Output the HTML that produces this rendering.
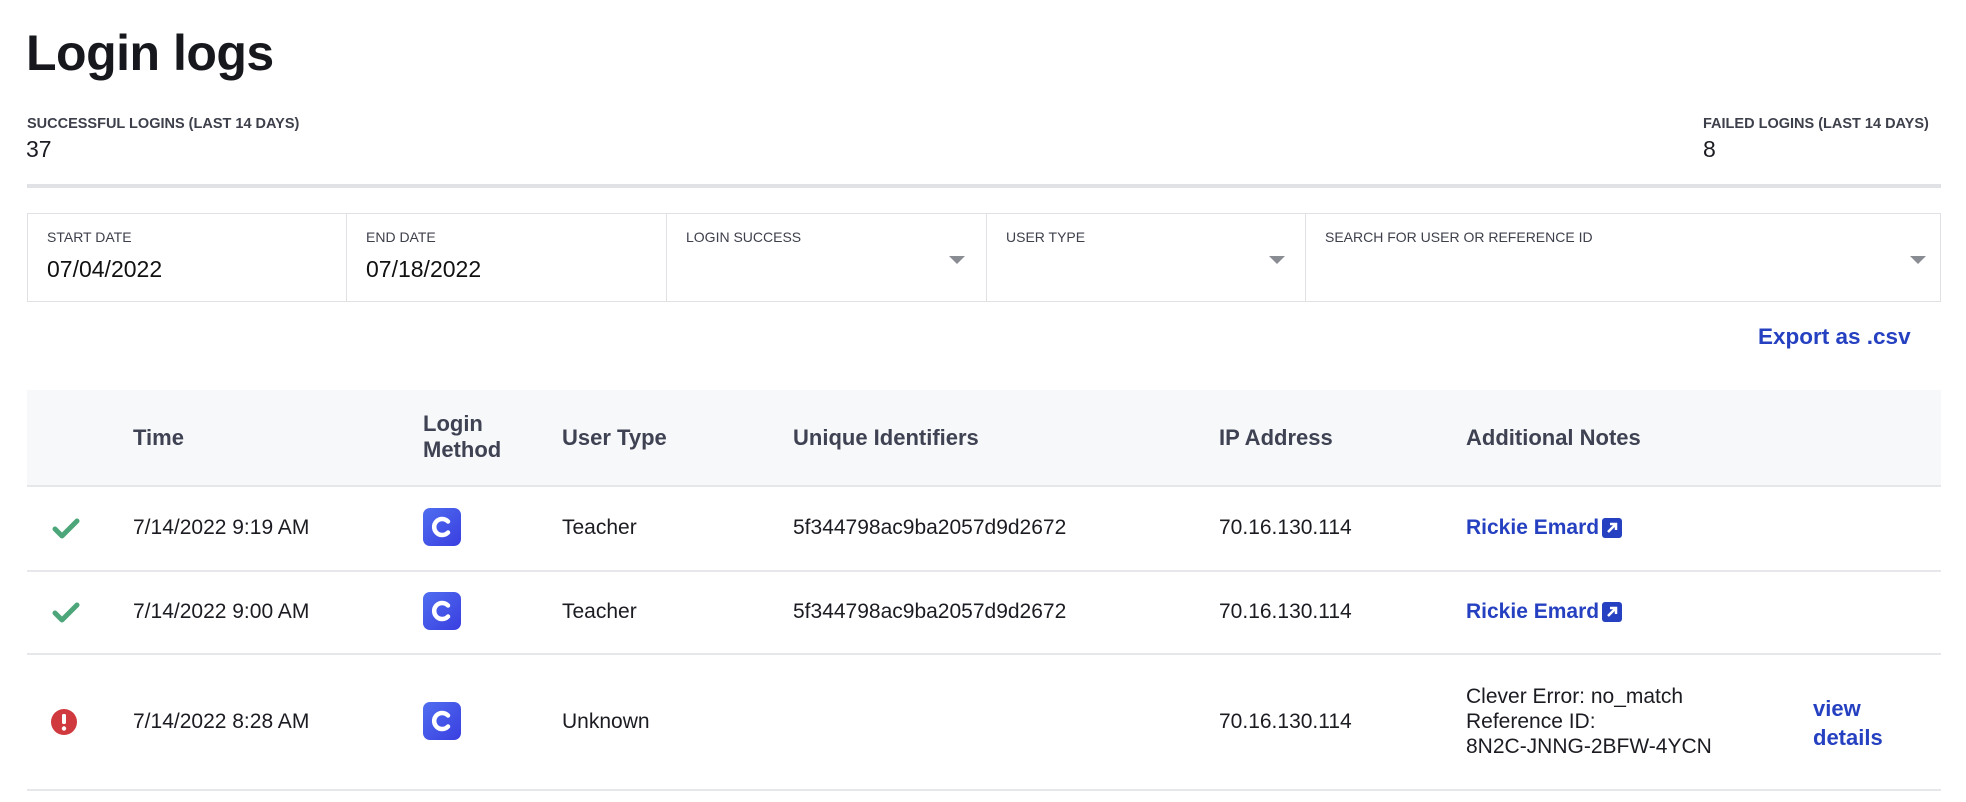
<!DOCTYPE html>
<html><head><meta charset="utf-8"><style>
*{margin:0;padding:0;box-sizing:border-box}
body{width:1966px;height:802px;background:#fff;font-family:"Liberation Sans",sans-serif;color:#1b1c22;position:relative;overflow:hidden}
.a{position:absolute;white-space:nowrap}
h1{position:absolute;left:26px;top:24px;font-size:50px;font-weight:bold;letter-spacing:-0.5px;color:#17181d}
.lbl{font-size:14.5px;font-weight:bold;color:#3d3f4b}
.num{font-size:23px;color:#1b1c22}
.filters{position:absolute;left:27px;top:213px;width:1914px;height:89px;border:1.5px solid #dfe1e5;display:flex}
.f{position:relative;border-right:1.5px solid #dfe1e5;height:100%}
.f:last-child{border-right:none}
.f .l{position:absolute;left:19px;top:15px;font-size:14px;color:#3d3f4b}
.f .v{position:absolute;left:19px;top:42px;font-size:23px;color:#111}
.arr{position:absolute;top:42px;width:0;height:0;border-left:8px solid transparent;border-right:8px solid transparent;border-top:8px solid #8a8c94}
.hdr{position:absolute;left:27px;top:390px;width:1914px;height:97px;background:#f7f8fa;border-bottom:2px solid #e6e7ea}
.h{position:absolute;font-size:22px;font-weight:bold;color:#3f4252;line-height:26px}
.line{position:absolute;left:27px;width:1914px;height:2px;background:#e6e7ea}
.t{position:absolute;font-size:21px;color:#1b1c22;white-space:nowrap}
.t.blue,.blue{color:#2540c0;font-weight:bold}
.c{position:absolute;left:423px;width:38px;height:38px;border-radius:7px;background:linear-gradient(135deg,#4f6ef0,#3a3ee0)}
</style></head><body>
<h1>Login logs</h1>
<div class="a lbl" style="left:27px;top:116px">SUCCESSFUL LOGINS (LAST 14 DAYS)</div>
<div class="a num" style="left:26px;top:136px">37</div>
<div class="a lbl" style="left:1703px;top:116px">FAILED LOGINS (LAST 14 DAYS)</div>
<div class="a num" style="left:1703px;top:136px">8</div>
<div class="a" style="left:27px;top:184px;width:1914px;height:4px;background:#e0e2e6"></div>
<div class="filters">
<div class="f" style="width:319px"><div class="l">START DATE</div><div class="v">07/04/2022</div></div>
<div class="f" style="width:320px"><div class="l">END DATE</div><div class="v">07/18/2022</div></div>
<div class="f" style="width:320px"><div class="l">LOGIN SUCCESS</div><div class="arr" style="left:282px"></div></div>
<div class="f" style="width:319px"><div class="l">USER TYPE</div><div class="arr" style="left:282px"></div></div>
<div class="f" style="flex:1"><div class="l">SEARCH FOR USER OR REFERENCE ID</div><div class="arr" style="left:604px"></div></div>
</div>
<div class="a blue" style="left:1758px;top:324px;font-size:22.5px">Export as .csv</div>
<div class="hdr"></div>
<div class="h" style="left:133px;top:425px">Time</div>
<div class="h" style="left:423px;top:411px">Login<br>Method</div>
<div class="h" style="left:562px;top:425px">User Type</div>
<div class="h" style="left:793px;top:425px">Unique Identifiers</div>
<div class="h" style="left:1219px;top:425px">IP Address</div>
<div class="h" style="left:1466px;top:425px">Additional Notes</div>

<svg class="a" style="left:52px;top:518px" width="28" height="22" viewBox="0 0 28 22"><path d="M3 11l7 7L25 3" fill="none" stroke="#4ca679" stroke-width="5" stroke-linecap="round" stroke-linejoin="round"/></svg>
<div class="t" style="left:133px;top:516px">7/14/2022 9:19 AM</div>
<svg class="c" style="top:508px" viewBox="0 0 38 38"><path d="M25 13.5a8 8 0 1 0 0 11" fill="none" stroke="#fff" stroke-width="4.5" stroke-linecap="round"/></svg>
<div class="t" style="left:562px;top:516px">Teacher</div>
<div class="t" style="left:793px;top:516px">5f344798ac9ba2057d9d2672</div>
<div class="t" style="left:1219px;top:516px">70.16.130.114</div>
<div class="t blue" style="left:1466px;top:516px">Rickie Emard</div>
<svg class="a" style="left:1602px;top:518px" width="20" height="20" viewBox="0 0 20 20"><rect width="20" height="20" rx="3" fill="#2540c0"/><path d="M6 14L14 6M8 6h6v6" fill="none" stroke="#fff" stroke-width="2.5"/></svg>
<div class="line" style="top:570px"></div>

<svg class="a" style="left:52px;top:602px" width="28" height="22" viewBox="0 0 28 22"><path d="M3 11l7 7L25 3" fill="none" stroke="#4ca679" stroke-width="5" stroke-linecap="round" stroke-linejoin="round"/></svg>
<div class="t" style="left:133px;top:600px">7/14/2022 9:00 AM</div>
<svg class="c" style="top:592px" viewBox="0 0 38 38"><path d="M25 13.5a8 8 0 1 0 0 11" fill="none" stroke="#fff" stroke-width="4.5" stroke-linecap="round"/></svg>
<div class="t" style="left:562px;top:600px">Teacher</div>
<div class="t" style="left:793px;top:600px">5f344798ac9ba2057d9d2672</div>
<div class="t" style="left:1219px;top:600px">70.16.130.114</div>
<div class="t blue" style="left:1466px;top:600px">Rickie Emard</div>
<svg class="a" style="left:1602px;top:602px" width="20" height="20" viewBox="0 0 20 20"><rect width="20" height="20" rx="3" fill="#2540c0"/><path d="M6 14L14 6M8 6h6v6" fill="none" stroke="#fff" stroke-width="2.5"/></svg>
<div class="line" style="top:653px"></div>

<svg class="a" style="left:51px;top:709px" width="26" height="26" viewBox="0 0 26 26"><circle cx="13" cy="13" r="13" fill="#d03a3e"/><rect x="11" y="5" width="4" height="10" rx="1.5" fill="#fff"/><circle cx="13" cy="19.5" r="2.2" fill="#fff"/></svg>
<div class="t" style="left:133px;top:710px">7/14/2022 8:28 AM</div>
<svg class="c" style="top:702px" viewBox="0 0 38 38"><path d="M25 13.5a8 8 0 1 0 0 11" fill="none" stroke="#fff" stroke-width="4.5" stroke-linecap="round"/></svg>
<div class="t" style="left:562px;top:710px">Unknown</div>
<div class="t" style="left:1219px;top:710px">70.16.130.114</div>
<div class="t" style="left:1466px;top:684px;line-height:25px">Clever Error: no_match<br>Reference ID:<br>8N2C-JNNG-2BFW-4YCN</div>
<div class="t blue" style="left:1813px;top:694px;font-size:22px;line-height:29px">view<br>details</div>
<div class="line" style="top:789px"></div>
</body></html>
